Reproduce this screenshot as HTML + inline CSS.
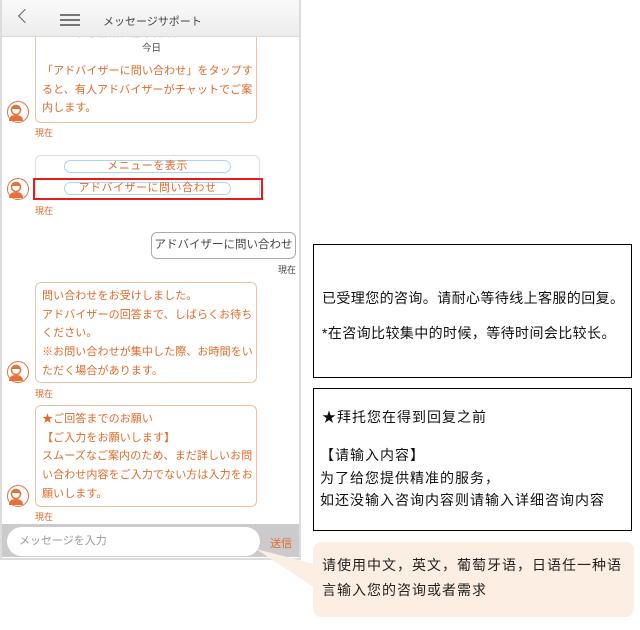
<!DOCTYPE html>
<html><head><meta charset="utf-8"><style>
*{margin:0;padding:0;box-sizing:border-box}
body{width:640px;height:630px;background:#fff;position:relative;overflow:hidden;font-family:"Liberation Sans","Noto Sans CJK JP",sans-serif}
.a{position:absolute}
.phone{left:0;top:0;width:301px;height:560px;border:2px solid #dcdcdc;border-top:none;background:#fff;overflow:hidden}
.hdr{left:0;top:0;width:297px;height:37px;background:linear-gradient(#fafafa,#ececec);border-bottom:1px solid #d8d8d8;z-index:5}
.bub{border:1px solid #f0c2a4;border-radius:6px;background:#fff}
.t{font-size:11px;color:#e06a2a;line-height:18.7px;letter-spacing:0.1px}
.now{font-size:9px;color:#e06a2a}
.pill{border:1.5px solid #a9d7ee;border-radius:8px;height:13px;font-size:11px;line-height:10px;text-align:center;color:#e06a2a;letter-spacing:0.5px}
.av{width:22px;height:22px;border-radius:50%;border:1.5px solid #e8703a;background:#fff;overflow:hidden}
.box{border:1px solid #000;font-family:"Liberation Sans","Noto Sans CJK SC",sans-serif;font-size:14px;color:#111;white-space:nowrap}
</style></head><body>
<div class="a phone">
  <div class="a hdr">
    <div class="a" style="left:18px;top:11px;width:10px;height:10px;border-left:1.5px solid #666;border-bottom:1.5px solid #666;transform:rotate(45deg)"></div>
    <div class="a" style="left:58px;top:14px;width:20px;height:1.5px;background:#777;box-shadow:0 5px 0 #777,0 10px 0 #777"></div>
    <div class="a" style="left:101px;top:13px;font-size:11px;color:#444">メッセージサポート</div>
  </div>
  <div class="a bub" style="left:33px;top:20px;width:222px;height:103px"></div>
  <div class="a" style="left:40px;top:33px;font-size:11px;color:#f3d7c4">ニューから選択してください。</div>
  <div class="a" style="left:36px;top:38px;width:215px;height:18px;background:#fff"></div>
  <div class="a" style="left:140px;top:40px;font-size:9.5px;color:#444">今日</div>
  <div class="a t" style="left:40px;top:62px;width:216px">「アドバイザーに問い合わせ」をタップすると、有人アドバイザーがチャットでご案内します。</div>
  <div class="a av" style="left:5px;top:101px"></div>
  <div class="a now" style="left:33px;top:126px">現在</div>

  <div class="a bub" style="left:33px;top:155px;width:225px;height:45px;border-color:#ddd"></div>
  <div class="a pill" style="left:62px;top:160px;width:167px">メニューを表示</div>
  <div class="a pill" style="left:62px;top:182px;width:167px">アドバイザーに問い合わせ</div>
  <div class="a" style="left:31px;top:178px;width:230px;height:22px;border:2px solid #e51c1c"></div>
  <div class="a av" style="left:5px;top:178px"></div>
  <div class="a now" style="left:33px;top:204px">現在</div>

  <div class="a" style="left:149px;top:232px;width:145px;height:27px;border:1px solid #aaa;border-radius:6px;font-size:11.5px;color:#444;line-height:25px;text-align:center;white-space:nowrap">アドバイザーに問い合わせ</div>
  <div class="a" style="left:276px;top:263px;font-size:9px;color:#444">現在</div>

  <div class="a bub" style="left:33px;top:282px;width:222px;height:101px"></div>
  <div class="a t" style="left:40px;top:287px;width:216px">問い合わせをお受けしました。<br>アドバイザーの回答まで、しばらくお待ちください。<br>※お問い合わせが集中した際、お時間をいただく場合があります。</div>
  <div class="a av" style="left:5px;top:361px"></div>
  <div class="a now" style="left:33px;top:387px">現在</div>

  <div class="a bub" style="left:33px;top:405px;width:222px;height:102px"></div>
  <div class="a t" style="left:40px;top:410px;width:216px">★ご回答までのお願い<br>【ご入力をお願いします】<br>スムーズなご案内のため、まだ詳しいお問い合わせ内容をご入力でない方は入力をお願いします。</div>
  <div class="a av" style="left:5px;top:485px"></div>
  <div class="a now" style="left:33px;top:510px">現在</div>

  <div class="a" style="left:0;top:524px;width:297px;height:33px;background:#cbcbce"></div>
  <div class="a" style="left:5px;top:527px;width:253px;height:29px;background:#fff;border-radius:15px;font-size:11px;color:#999;line-height:29px;padding-left:12px">メッセージを入力</div>
  <div class="a" style="left:268px;top:535px;font-size:11px;color:#e06a2a">送信</div>
</div>
<svg class="a" style="left:0;top:0" width="640" height="630">
  <defs><g id="av"><circle cx="0" cy="-2" r="4.5" fill="none" stroke="#e8703a" stroke-width="1.5"/><path d="M-7 9 Q-7 3 0 3 Q7 3 7 9 Z" fill="#e8703a"/><path d="M-4.5 -3 Q0 -9 4.5 -3" fill="#e8703a"/></g></defs>
  <use href="#av" x="16" y="112"/><use href="#av" x="16" y="189"/><use href="#av" x="16" y="372"/><use href="#av" x="16" y="496"/>
  <polygon points="256,549 318,565 318,590" fill="#fdeee4"/>
</svg>
<div class="a box" style="left:313px;top:244px;width:319px;height:134px">
  <div class="a" style="left:8px;top:43px;letter-spacing:0.4px">已受理您的咨询。请耐心等待线上客服的回复。</div>
  <div class="a" style="left:8px;top:78px;letter-spacing:0.4px">*在咨询比较集中的时候，等待时间会比较长。</div>
</div>
<div class="a box" style="left:313px;top:388px;width:319px;height:143px;letter-spacing:1px">
  <div class="a" style="left:8px;top:18px">★拜托您在得到回复之前</div>
  <div class="a" style="left:6px;top:55px;line-height:22.5px">【请输入内容】<br>为了给您提供精准的服务，<br>如还没输入咨询内容则请输入详细咨询内容</div>
</div>
<div class="a" style="left:313px;top:542px;width:321px;height:75px;background:#fdeee4;border-radius:8px;font-family:'Liberation Sans','Noto Sans CJK SC',sans-serif;font-size:14px;letter-spacing:1px;color:#222;line-height:25px;padding:11px 0 0 9px;white-space:nowrap">请使用中文，英文，葡萄牙语，日语任一种语<br>言输入您的咨询或者需求</div>
</body></html>
